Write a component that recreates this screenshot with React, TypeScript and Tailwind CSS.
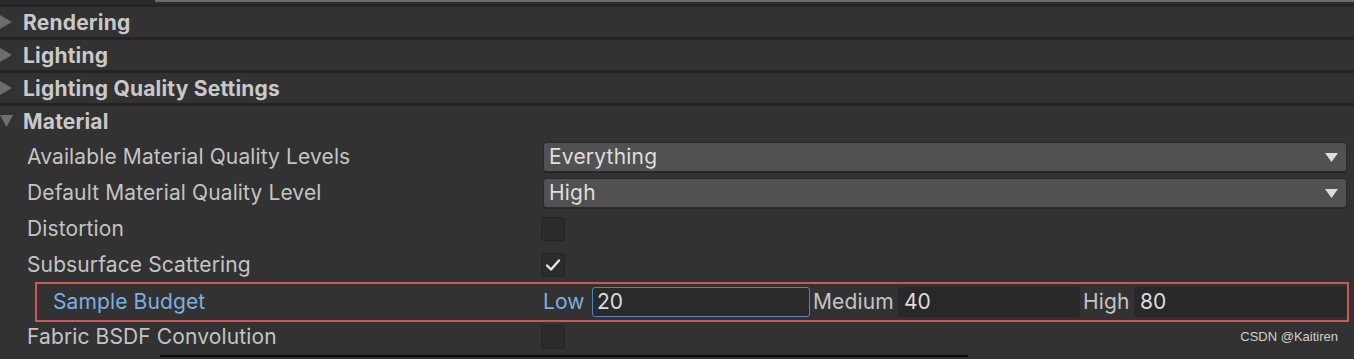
import React from "react";

const font = { fontFamily: "Inter, 'Noto Sans', sans-serif" };

function Header({ title, open }: { title: string; open?: boolean }) {
  return (
    <div className="flex h-[30px] items-center bg-[#323232]">
      <div className="flex w-[23px] items-center">
        {open ? (
          <svg width="13" height="12" viewBox="0 0 13 12">
            <polygon points="0,0 13,0 6.5,12" fill="#707070" />
          </svg>
        ) : (
          <svg width="12" height="14" viewBox="0 0 12 14">
            <polygon points="0,0 12,7 0,14" fill="#6c6c6c" />
          </svg>
        )}
      </div>
      <span className="text-[21px] font-bold tracking-[0.2px] text-[#c9c9c9] leading-none">{title}</span>
    </div>
  );
}

function Sep() {
  return <div className="h-[3px] bg-[#242424]" />;
}

function Dropdown({ value }: { value: string }) {
  return (
    <div className="flex h-[30px] flex-1 items-center justify-between rounded-[3px] border border-[#2a2a2a] bg-[#515151] pl-[5px] pr-[8px] shadow-[0_1px_0_#262626]">
      <span className="text-[21px] tracking-[0.2px] text-[#dedede]">{value}</span>
      <svg width="13" height="9" viewBox="0 0 13 9">
        <polygon points="0,0 13,0 6.5,9" fill="#dcdcdc" />
      </svg>
    </div>
  );
}

function Checkbox({ checked }: { checked?: boolean }) {
  return (
    <div className="flex h-[24px] w-[24px] items-center justify-center rounded-[3px] border border-[#242424] bg-[#2b2b2b]">
      {checked && (
        <svg width="16" height="14" viewBox="0 0 16 14">
          <path d="M2 7.5 L6 11.5 L14 2.5" stroke="#e6e6e6" strokeWidth="2.4" fill="none" strokeLinecap="round" strokeLinejoin="round" />
        </svg>
      )}
    </div>
  );
}

function Row({ label, children }: { label: string; children: React.ReactNode }) {
  return (
    <div className="flex h-[36px] items-center pr-[7px]">
      <div className="w-[541px] pl-[27px] text-[21px] tracking-[0.12px] text-[#c4c4c4]">{label}</div>
      <div className="flex flex-1 items-center">{children}</div>
    </div>
  );
}

export default function App() {
  return (
    <div className="relative h-[359px] w-[1354px] overflow-hidden bg-[#323232]" style={font}>
      <div className="flex h-[2px]">
        <div className="w-[155px] bg-[#2a2a2a]" />
        <div className="flex-1 bg-[#6b6b6b]" />
      </div>
      <div className="h-[2px] bg-[#2c2c2c]" />
      <div className="h-[3px] bg-[#262626]" />
      <Header title="Rendering" />
      <Sep />
      <Header title="Lighting" />
      <Sep />
      <Header title="Lighting Quality Settings" />
      <Sep />
      <Header title="Material" open />
      <div className="h-[3px]" />
      <Row label="Available Material Quality Levels">
        <div className="ml-[2px] flex flex-1">
          <Dropdown value="Everything" />
        </div>
      </Row>
      <Row label="Default Material Quality Level">
        <div className="ml-[2px] flex flex-1">
          <Dropdown value="High" />
        </div>
      </Row>
      <Row label="Distortion">
        <Checkbox />
      </Row>
      <Row label="Subsurface Scattering">
        <Checkbox checked />
      </Row>
      <div className="flex h-[36px] items-center">
        <div className="ml-[35px] mr-[5px] mt-[2px] flex h-[40px] flex-1 items-center border-2 border-[#d0555a]">
          <div className="w-[506px] pl-[16px] text-[21px] tracking-[0.12px] text-[#7eaee0]">Sample Budget</div>
          <span className="w-[49px] text-[21px] tracking-[0.12px] text-[#7eaee0]">Low</span>
          <div className="flex h-[30px] w-[218px] items-center rounded-[3px] border border-[#4d88c4] bg-[#2a2a2a] pl-[4px] text-[21px] text-[#dcdcdc]">
            20
          </div>
          <span className="w-[88px] pl-[3px] text-[21px] tracking-[0.12px] text-[#c4c4c4]">Medium</span>
          <div className="flex h-[30px] w-[182px] items-center rounded-[3px] bg-[#282828] pl-[6px] text-[21px] text-[#dcdcdc]">
            40
          </div>
          <span className="w-[54px] pl-[3px] text-[21px] tracking-[0.12px] text-[#c4c4c4]">High</span>
          <div className="flex h-[30px] flex-1 items-center rounded-[3px] bg-[#282828] pl-[6px] text-[21px] text-[#dcdcdc]">
            80
          </div>
        </div>
      </div>
      <Row label="Fabric BSDF Convolution">
        <Checkbox />
        <div className="flex-1" />
        <span className="mr-[9px] text-[13px] text-[#d0d0d0]" style={{ fontFamily: "'Liberation Sans', Arial, sans-serif" }}>
          CSDN @Kaitiren
        </span>
      </Row>
      <div className="flex h-[2px]">
        <div className="w-[160px]" />
        <div className="w-[808px] bg-[#0a0a0a]" />
        <div className="flex-1" />
      </div>
    </div>
  );
}
